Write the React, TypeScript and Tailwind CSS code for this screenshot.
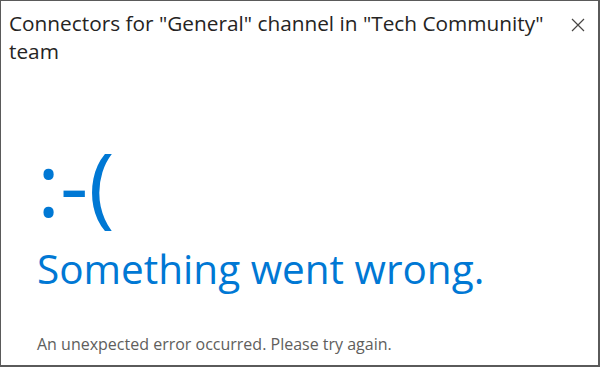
import React from "react";

export default function App() {
  return (
    <div className="w-[600px] h-[367px] bg-white border-t border-l border-r-2 border-b-2 border-[#5a5a5a] flex flex-col" style={{ fontFamily: '"Open Sans", "Noto Sans", sans-serif' }}>
      <div className="flex items-start justify-between pl-[8px] pr-[12px] pt-[8px]">
        <h1 className="text-[20.8px] leading-[28px] text-[#252423] font-normal w-[548px]">
          Connectors for "General" channel in "Tech Community" team
        </h1>
        <button className="mt-[8px] w-[16px] h-[16px] flex items-center justify-center text-[#484644]">
          <svg width="14" height="14" viewBox="0 0 14 14" fill="none" stroke="currentColor" strokeWidth="1.2">
            <path d="M1 1 L13 13 M13 1 L1 13" />
          </svg>
        </button>
      </div>
      <div className="flex flex-col pl-[36px] mt-[76px]">
        <div className="text-[#0078d4] text-[88px] leading-[84px] font-normal">:-(</div>
        <div className="text-[#0078d4] text-[40.5px] leading-[50px] mt-[19px]">Something went wrong.</div>
        <div className="text-[#605e5c] text-[16px] leading-[20px] mt-[40px]">An unexpected error occurred. Please try again.</div>
      </div>
    </div>
  );
}
